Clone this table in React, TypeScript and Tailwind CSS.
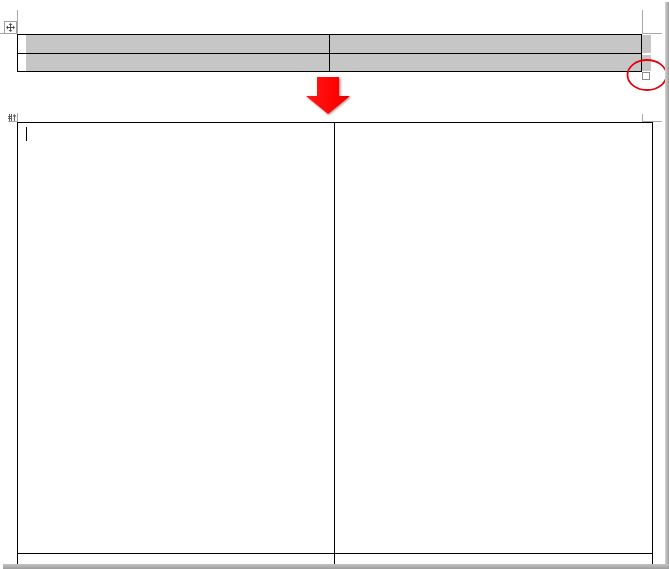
import React from "react";

function MoveIcon() {
  return (
    <svg width="9" height="9" viewBox="0 0 9 9" className="block">
      <g fill="#505050">
        <rect x="4" y="1" width="1" height="7" />
        <rect x="1" y="4" width="7" height="1" />
        <polygon points="4.5,0 2.5,2 6.5,2" />
        <polygon points="4.5,9 2.5,7 6.5,7" />
        <polygon points="0,4.5 2,2.5 2,6.5" />
        <polygon points="9,4.5 7,2.5 7,6.5" />
      </g>
    </svg>
  );
}

function SmallHandle() {
  return (
    <svg width="9" height="7" viewBox="0 0 9 7" className="block">
      <g fill="#606060">
        <rect x="0" y="2" width="4" height="1" />
        <rect x="0" y="4" width="4" height="1" />
        <rect x="1" y="0" width="1" height="7" />
        <rect x="3" y="0" width="1" height="7" />
        <rect x="6" y="1" width="1" height="6" />
        <polygon points="6.5,0 4.5,2.5 8.5,2.5" />
      </g>
    </svg>
  );
}

function Arrow() {
  return (
    <svg width="46" height="39" viewBox="0 0 46 39" className="block">
      <defs>
        <linearGradient id="ag" x1="0" y1="0" x2="1" y2="0">
          <stop offset="0" stopColor="#ff1a1a" />
          <stop offset="0.7" stopColor="#ff0000" />
          <stop offset="1" stopColor="#e00000" />
        </linearGradient>
        <filter id="sh" x="-20%" y="-20%" width="140%" height="140%">
          <feGaussianBlur stdDeviation="0.8" />
        </filter>
      </defs>
      <polygon
        points="12.5,1 34.5,1 34.5,20 45,20 23,38 1,20 12.5,20"
        fill="#7a2020"
        opacity="0.55"
        filter="url(#sh)"
      />
      <polygon points="11,0 33,0 33,19 44,19 22,37 0,19 11,19" fill="url(#ag)" />
    </svg>
  );
}

export default function App() {
  return (
    <div className="relative w-[669px] h-[569px] bg-white overflow-hidden">
      {/* page content in flow */}
      <div className="flex flex-col pt-[34px] pl-[17px]">
        {/* top table with end-of-row markers */}
        <div className="flex">
          <div className="w-[625px] border border-black">
            <div className="flex h-[19px] border-b border-black">
              <div className="w-[312px] pl-[8px] border-r border-black">
                <div className="h-full bg-[#c6c6c6]" />
              </div>
              <div className="flex-1 bg-[#c6c6c6]" />
            </div>
            <div className="flex h-[17px]">
              <div className="w-[312px] pl-[8px] border-r border-black">
                <div className="h-full bg-[#c6c6c6]" />
              </div>
              <div className="flex-1 bg-[#c6c6c6]" />
            </div>
          </div>
          <div className="flex flex-col w-[9px] pt-[1px]">
            <div className="h-[18px] bg-[#c6c6c6]" />
            <div className="h-[2px]" />
            <div className="h-[16px] bg-[#c6c6c6]" />
          </div>
        </div>

        {/* arrow */}
        <div className="ml-[289px] mt-[5px] h-[37px]">
          <Arrow />
        </div>

        {/* second table */}
        <div className="mt-[8px] w-[636px] border border-black">
          <div className="flex h-[431px] border-b border-black">
            <div className="w-[317px] border-r border-black pl-[8px] pt-[4px]">
              <div className="w-px h-[14px] bg-black" />
            </div>
            <div className="flex-1" />
          </div>
          <div className="flex h-[20px]">
            <div className="w-[317px] border-r border-black" />
            <div className="flex-1" />
          </div>
        </div>
      </div>

      {/* top-left corner marks and move handle */}
      <div className="absolute left-[17px] top-[10px] w-px h-[24px] bg-[#a8a8a8]" />
      <div className="absolute left-0 top-[33px] w-[5px] h-px bg-[#a8a8a8]" />
      <div className="absolute left-[4px] top-[21px] w-[13px] h-[13px] border border-[#a0a0a0] bg-white flex items-center justify-center">
        <MoveIcon />
      </div>

      {/* top-right corner marks */}
      <div className="absolute left-[642px] top-[10px] w-px h-[24px] bg-[#a8a8a8]" />
      <div className="absolute left-[642px] top-[33px] w-[20px] h-px bg-[#a8a8a8]" />

      {/* resize handle square */}
      <div className="absolute left-[642px] top-[72px] w-[8px] h-[8px] border border-[#8c8c8c] bg-white" />

      {/* red ellipse */}
      <svg className="absolute left-[626px] top-[58px]" width="42" height="34" viewBox="0 0 42 34">
        <ellipse cx="21" cy="17" rx="19.5" ry="15" fill="none" stroke="#e8000b" strokeWidth="1.8" />
      </svg>

      {/* second table handle */}
      <div className="absolute left-[8px] top-[114px]">
        <SmallHandle />
      </div>
      <div className="absolute left-[8px] top-[121px] w-[10px] h-px bg-[#a8a8a8]" />
      <div className="absolute left-[17px] top-[113px] w-px h-[9px] bg-[#a8a8a8]" />

      {/* second table right corner marks */}
      <div className="absolute left-[642px] top-[114px] w-px h-[8px] bg-[#a8a8a8]" />
      <div className="absolute left-[642px] top-[121px] w-[20px] h-px bg-[#a8a8a8]" />

      {/* window shadows */}
      <div className="absolute right-0 top-[2px] w-[4px] h-full bg-gradient-to-r from-[#d4d4d4] to-[#9c9c9c]" />
      <div className="absolute left-[3px] bottom-0 h-[5px] w-full bg-gradient-to-b from-[#c4c4c4] to-[#9c9c9c]" />
    </div>
  );
}
